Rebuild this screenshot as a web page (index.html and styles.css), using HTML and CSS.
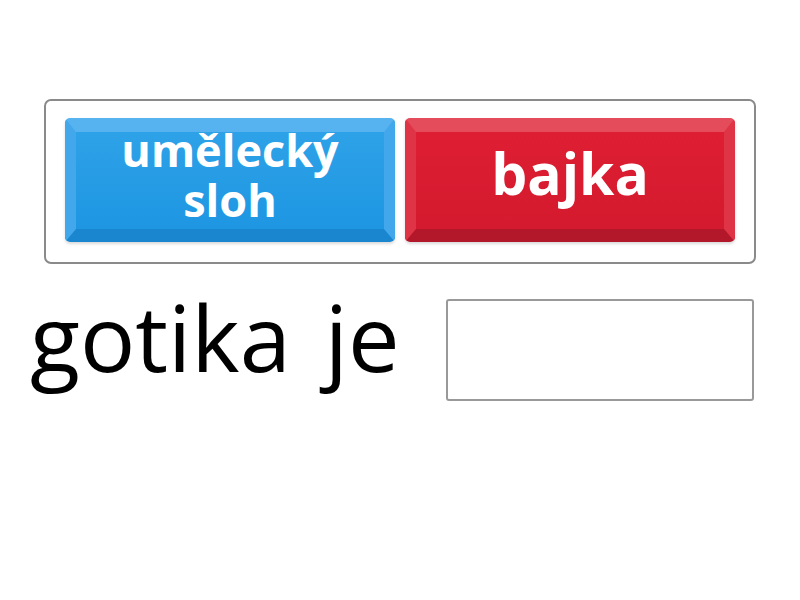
FILE: index.html
```html
<!DOCTYPE html>
<html lang="cs">
<head>
    <meta charset="UTF-8">
    <meta name="viewport" content="width=device-width, initial-scale=1.0">
    <title>gotika je</title>
    <link rel="stylesheet" href="styles.css">
</head>
<body>
    <div class="page">
        <div class="answers">
            <button type="button" class="answer blue">umělecký sloh</button>
            <button type="button" class="answer red">bajka</button>
        </div>

        <div class="question">
            <span class="question-text">gotika je</span>
            <div class="drop-box"></div>
        </div>
    </div>
</body>
</html>
```

FILE: styles.css
```css
body {
    margin: 0;
    font-family: "Open Sans", Arial, sans-serif;
    background: #fff;
}
.page {
    padding: 99px 44px 0 30px;
}
.answers {
    display: flex;
    gap: 10px;
    width: 670px;
    margin-left: 14px;
    padding: 17px 19px 20px 19px;
    border: 2px solid #8a8a8a;
    border-radius: 7px;
}
.answer {
    box-sizing: border-box;
    display: flex;
    align-items: center;
    justify-content: center;
    width: 330px;
    height: 124px;
    border-style: solid;
    border-width: 14px 11px 13px 11px;
    border-radius: 5px;
    color: #fff;
    font-family: "Open Sans", Arial, sans-serif;
    font-weight: bold;
    text-align: center;
    padding: 0 0 15px 0;
    cursor: pointer;
    box-shadow: 0 2px 3px rgba(0, 0, 0, 0.15);
}
.blue {
    background: linear-gradient(#2ea2e8, #1e96e2);
    border-color: #57b3ef #42a8eb #1a86cf #42a8eb;
    font-size: 45px;
    line-height: 50px;
    padding-bottom: 12px;
}
.red {
    background: linear-gradient(#de1e33, #d41a2e);
    border-color: #e44b5b #df3446 #b2172a #df3446;
    font-size: 57px;
}
.question {
    display: flex;
    align-items: flex-start;
    margin-top: 35px;
}
.question-text {
    font-size: 92px;
    line-height: 92px;
    word-spacing: 10px;
    margin-top: -8px;
    color: #000;
    width: 416px;
}
.drop-box {
    width: 304px;
    height: 98px;
    border: 2px solid #999;
    border-radius: 3px;
}
```
